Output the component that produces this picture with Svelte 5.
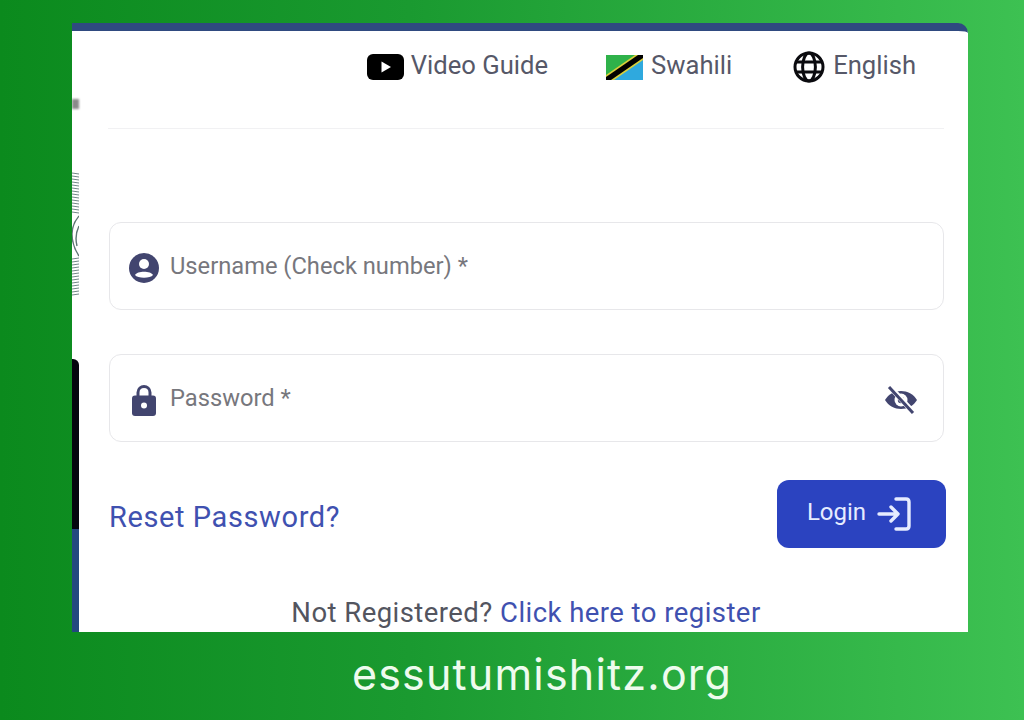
<script>
    let username = "Username (Check number) *";
    let password = "Password *";

    // fine lines of the fingerprint pattern showing at the card edge
    const upperLines = Array.from({ length: 14 }, (_, i) => 1 + i * 3);
    const lowerLines = Array.from({ length: 13 }, (_, i) => 86 + i * 3);
</script>

<div class="page">
    <main class="card">
        <!-- what is left of the photo panel on the left of the login box -->
        <div class="strip">
            <span class="strip-mark"></span>
            <svg class="strip-print" width="7" height="124" viewBox="0 0 7 124" fill="none" stroke="#728888" stroke-width="1">
                {#each upperLines as y}
                    <path d="M0 {y} L7 {y + 1}" />
                {/each}
                <path d="M7 44 C2 50 0 56 0 62 C0 72 3 78 7 84 M7 54 C4 60 3 66 5 74" stroke="#5f7575" stroke-width="1.4" />
                {#each lowerLines as y}
                    <path d="M0 {y + 1} L7 {y}" />
                {/each}
            </svg>
            <span class="strip-dark"></span>
            <span class="strip-blue"></span>
        </div>

        <nav class="topnav">
            <a class="navlink video" href="#video">
                <svg width="37" height="26" viewBox="0 0 37 26">
                    <rect width="37" height="26" rx="6" fill="#000" />
                    <path d="M14.5 7.5 L24 13 L14.5 18.5 Z" fill="#fff" />
                </svg>
                <span class="navtext">Video Guide</span>
            </a>
            <a class="navlink swahili" href="#sw">
                <svg width="37" height="25" viewBox="0 0 37 25">
                    <rect width="37" height="25" fill="#2fb24a" />
                    <path d="M37 0 V25 H0 Z" fill="#2fa9de" />
                    <path d="M0 25 V20 L29 0 H37 V5 L8 25 Z" fill="#d8cf3a" />
                    <path d="M0 25 V22 L32 0 H37 V3 L5 25 Z" fill="#000" />
                </svg>
                <span class="navtext">Swahili</span>
            </a>
            <a class="navlink english" href="#en">
                <svg width="32" height="32" viewBox="0 0 32 32" fill="none" stroke="#0b0b0f" stroke-width="3">
                    <circle cx="16" cy="16" r="14" />
                    <ellipse cx="16" cy="16" rx="6.4" ry="14" />
                    <path d="M3 11 H29 M3 21 H29" />
                </svg>
                <span class="navtext">English</span>
            </a>
        </nav>

        <form class="form">
            <div class="field">
                <svg class="field-icon" width="30" height="30" viewBox="0 0 30 30">
                    <circle cx="15" cy="15" r="15" fill="#42456f" />
                    <circle cx="15" cy="11" r="5" fill="#fff" />
                    <path d="M6 22 C8 17.5 22 17.5 24 22 C21.5 25.5 8.5 25.5 6 22 Z" fill="#fff" />
                </svg>
                <span class="label">{username}</span>
            </div>

            <div class="field">
                <svg class="field-icon lock" width="24" height="32" viewBox="0 0 24 32">
                    <path d="M6 13 V8.5 C6 0.5 18 0.5 18 8.5 V13" fill="none" stroke="#42456f" stroke-width="3" />
                    <rect y="11.5" width="24" height="20.5" rx="3" fill="#42456f" />
                    <circle cx="12" cy="21.5" r="3" fill="#fff" />
                </svg>
                <span class="label">{password}</span>
                <svg class="eye" width="34" height="28" viewBox="0 0 34 28">
                    <path d="M1 14 C8 2 26 2 33 14 C26 26 8 26 1 14 Z" fill="#42456f" />
                    <circle cx="17" cy="14" r="6.5" fill="#fff" />
                    <circle cx="17" cy="14" r="3.2" fill="#42456f" />
                    <path d="M6 1 L29 26" stroke="#fff" stroke-width="5.5" />
                    <path d="M5 1 L29 27" stroke="#42456f" stroke-width="3" />
                </svg>
            </div>

            <div class="actions">
                <a class="reset" href="#reset">Reset Password?</a>
                <button class="login" type="button">
                    <span class="login-text">Login</span>
                    <svg width="34" height="34" viewBox="0 0 34 34" fill="none" stroke="#e6ecff" stroke-width="3.4" stroke-linecap="round" stroke-linejoin="round">
                        <path d="M19 2 H29 C31 2 32 3 32 5 V29 C32 31 31 32 29 32 H19" />
                        <path d="M2 17 H21 M14 10 L21 17 L14 24" />
                    </svg>
                </button>
            </div>

            <p class="register">
                Not Registered? <a href="#register">Click here to register</a>
            </p>
        </form>
    </main>

    <footer class="site">essutumishitz.org</footer>
</div>

<style>
    :global(body) {
        margin: 0;
    }

    .page {
        width: 1024px;
        height: 720px;
        box-sizing: border-box;
        padding: 23px 56px 0 72px;
        display: flex;
        flex-direction: column;
        overflow: hidden;
        background: linear-gradient(90deg, #0b8a1d 0%, #1a9a30 40%, #3dc152 100%);
        font-family: Roboto, "Liberation Sans", sans-serif;
    }

    .card {
        position: relative;
        height: 609px;
        flex: none;
        box-sizing: border-box;
        padding: 0 24px 0 36px;
        background: #fff;
        border-top: 8px solid #2f4a80;
        border-top-right-radius: 10px;
        overflow: hidden;
    }

    .strip {
        position: absolute;
        left: 0;
        top: 0;
        bottom: 0;
        width: 7px;
    }

    .strip span,
    .strip svg {
        position: absolute;
        left: 0;
        width: 7px;
    }

    .strip-mark {
        top: 68px;
        height: 10px;
        background: #8a8a8a;
        filter: blur(1px);
    }

    .strip-print {
        top: 141px;
    }

    .strip-dark {
        top: 328px;
        height: 170px;
        background: #05070f;
        border-top-right-radius: 6px;
    }

    .strip-blue {
        top: 498px;
        bottom: 0;
        background: #23487f;
    }

    .topnav {
        height: 98px;
        box-sizing: border-box;
        padding-top: 20px;
        display: flex;
        align-items: flex-start;
        justify-content: flex-end;
        border-bottom: 1px solid #f1f1f3;
    }

    .navlink {
        display: flex;
        align-items: center;
        height: 30px;
        gap: 7px;
        color: #565868;
        font-size: 25.6px;
        text-decoration: none;
        white-space: nowrap;
    }

    .navlink svg {
        margin-top: 2px;
    }

    .navtext {
        margin-top: -2px;
    }

    .swahili {
        gap: 8px;
        margin-left: 58px;
    }

    .english {
        gap: 8px;
        margin-left: 61px;
        margin-right: 28px;
    }

    .form {
        padding-top: 93px;
    }

    .field {
        height: 88px;
        box-sizing: border-box;
        margin-bottom: 44px;
        margin-left: 1px;
        padding: 0 25px 0 19px;
        display: flex;
        align-items: center;
        border: 1px solid #e7e7ea;
        border-radius: 12px;
    }

    .field-icon {
        flex: none;
        margin-top: 4px;
    }

    .lock {
        margin-left: 3px;
        margin-right: 3px;
    }

    .label {
        margin-left: 11px;
        color: #77777d;
        font-size: 23.7px;
    }

    .eye {
        margin-left: auto;
        margin-top: 4px;
    }

    .actions {
        margin-top: -6px;
        margin-right: -2px;
        display: flex;
        align-items: center;
        justify-content: space-between;
    }

    .reset {
        margin-top: 6px;
        margin-left: 1px;
        color: #3f51b0;
        font-size: 29px;
        letter-spacing: 0.6px;
        text-decoration: none;
    }

    .login {
        width: 169px;
        height: 68px;
        padding: 0 5px 0 0;
        display: flex;
        align-items: center;
        justify-content: center;
        gap: 11px;
        border: none;
        border-radius: 12px;
        background: #2b43c0;
        color: #e6ecff;
        font-family: inherit;
        font-size: 24px;
    }

    .login-text {
        margin-top: -4px;
    }

    .register {
        margin: 48px 0 0;
        text-align: center;
        color: #53555f;
        font-size: 27.5px;
        line-height: 34px;
        letter-spacing: 0.45px;
    }

    .register a {
        color: #3f51b0;
        text-decoration: none;
    }

    .site {
        margin-left: -72px;
        margin-right: -56px;
        padding-top: 12px;
        padding-left: 60px;
        text-align: center;
        color: #eefbee;
        font-family: Inter, "Open Sans", sans-serif;
        font-size: 43px;
        letter-spacing: 1.2px;
        line-height: 60px;
    }
</style>
